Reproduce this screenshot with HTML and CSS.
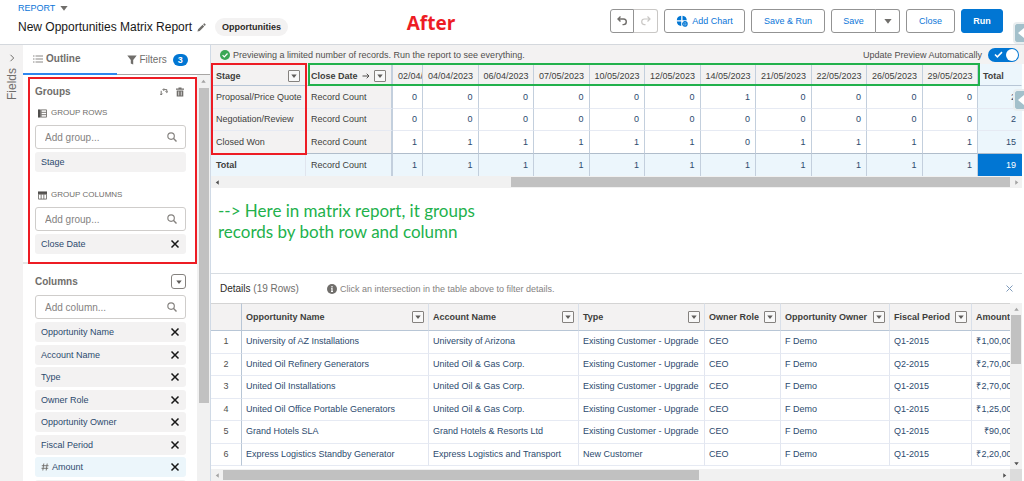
FILE: index.html
```html
<!DOCTYPE html>
<html lang="en">
<head>
  <meta charset="UTF-8">
  <title>New Opportunities Matrix Report</title>
  <meta name="viewport" content="width=device-width, initial-scale=1">
  <link rel="stylesheet" href="styles.css">
</head>
<body>
  <svg class="sprite" aria-hidden="true">
    <symbol id="i-down" viewBox="0 0 10 10"><path d="M0.5 2.5h9L5 8.5z" fill="currentColor"/></symbol>
    <symbol id="i-x" viewBox="0 0 10 10"><path d="M1.5 1.5l7 7M8.5 1.5l-7 7" stroke="currentColor" stroke-width="1.5" fill="none"/></symbol>
    <symbol id="i-search" viewBox="0 0 12 12"><circle cx="4.9" cy="4.9" r="3.9" stroke="currentColor" stroke-width="1.4" fill="none"/><path d="M7.6 7.6l3.8 3.8" stroke="currentColor" stroke-width="1.7"/></symbol>
  </svg>

  <header class="topbar">
    <div class="title-block">
      <button class="object-menu" type="button">REPORT <svg><use href="#i-down"/></svg></button>
      <div class="title-row">
        <h1>New Opportunities Matrix Report</h1>
        <svg class="pencil" viewBox="0 0 10 10"><path d="M0.5 9.5l0.7-2.5 5-5 1.8 1.8-5 5zM6.8 1.4l0.9-0.9q0.4-0.3 0.8 0l1 1q0.3 0.4 0 0.8l-0.9 0.9z" fill="#706e6b"/></svg>
        <span class="pill">Opportunities</span>
      </div>
    </div>
    <div class="after-note">After</div>
    <div class="actions">
      <div class="btn-group">
        <button class="btn icon-btn" type="button" aria-label="Undo"><svg viewBox="0 0 12 12"><path d="M4.5 1.500L2 4l2.500 2.500M2 4h5.500a2.800 2.800 0 0 1 0 5.600H6.500" fill="none" stroke="#706e6b" stroke-width="1.400"/></svg></button>
        <button class="btn icon-btn" type="button" aria-label="Redo" disabled><svg viewBox="0 0 12 12"><path d="M7.500 1.500L10 4 7.500 6.500M10 4H4.500a2.800 2.800 0 0 0 0 5.600h1" fill="none" stroke="#c9c7c5" stroke-width="1.200"/></svg></button>
      </div>
      <button class="btn add-chart" type="button">
        <svg viewBox="0 0 12 12"><path d="M5.200 0.800v4.400H0.800A4.800 4.800 0 0 1 5.200 0.800zM6.500 0.800a4.800 4.800 0 0 1 4.300 4.400H6.500zM0.800 6.500h4.400v4.400A4.800 4.800 0 0 1 0.800 6.500z" fill="#0176d3"/><circle cx="8.900" cy="8.900" r="2.200" fill="none" stroke="#0176d3" stroke-width="1.200"/><path d="M8.900 6.700v4.400M6.700 8.900h4.400" stroke="#0176d3"/></svg>
        Add Chart
      </button>
      <button class="btn save-run" type="button">Save &amp; Run</button>
      <div class="btn-group">
        <button class="btn save" type="button">Save</button>
        <button class="btn more-btn" type="button" aria-label="More save options"><svg><use href="#i-down"/></svg></button>
      </div>
      <button class="btn close" type="button">Close</button>
      <button class="btn run" type="button">Run</button>
    </div>
  </header>

  <div class="workspace">
    <div class="rail">
      <svg viewBox="0 0 6 8"><path d="M1.500 0.800L4.700 4 1.500 7.200" fill="none" stroke="#706e6b"/></svg>
      <span>Fields</span>
    </div>

    <aside class="outline">
      <nav class="tabs">
        <a class="tab active" href="#outline"><svg viewBox="0 0 10 8"><path d="M0 1h1.500M0 4h1.500M0 7h1.500M2.500 1H10M2.500 4H10M2.500 7H10" stroke="#8a8886"/></svg>Outline</a>
        <a class="tab" href="#filters"><svg viewBox="0 0 10 10"><path d="M0.300 0.500h9.400L6.200 5v4.500L3.800 8.500V5z" fill="#706e6b"/></svg>Filters <span class="count">3</span></a>
      </nav>
      <div class="outline-body" id="outline">
        <div class="outline-scroll">
          <section class="groups">
            <div class="section-head">
              <h2>Groups</h2>
              <svg class="swap" viewBox="0 0 10 10"><path d="M1.500 3.500v5M0 7l1.500 1.700L3.200 7M4 2h4.500v3M6.800 4.300l1.700 1.400 1.500-1.400M5 0.500L3.600 2 5 3.500" fill="none" stroke="#706e6b" stroke-width="1.200"/></svg>
              <svg class="trash" viewBox="0 0 8 10"><path d="M0 1.500h2.500V0.400h3v1.100H8v1.300H0zM0.700 3.500h6.600V9.500H0.700z" fill="#706e6b"/><path d="M2.700 4.500v4M5.300 4.500v4" stroke="#fff" stroke-width="0.700"/></svg>
            </div>
            <label class="group-label" for="groupRows"><svg viewBox="0 0 10 10"><path d="M0 0.500h3v9H0z" fill="#514f4d"/><path d="M3.500 1h6v8h-6zM3.500 3.700h6M3.500 6.300h6" fill="none" stroke="#706e6b"/></svg>GROUP ROWS</label>
            <div class="search"><input id="groupRows" type="text" placeholder="Add group..."><svg><use href="#i-search"/></svg></div>
            <div class="chip">Stage</div>
            <label class="group-label second" for="groupCols"><svg viewBox="0 0 10 10"><path d="M0 0.500h10v3H0z" fill="#514f4d"/><path d="M0.500 3.500h9V9h-9zM3.500 3.500V9M6.500 3.500V9" fill="none" stroke="#706e6b"/></svg>GROUP COLUMNS</label>
            <div class="search"><input id="groupCols" type="text" placeholder="Add group..."><svg><use href="#i-search"/></svg></div>
            <div class="chip">Close Date<button type="button" aria-label="Remove Close Date"><svg><use href="#i-x"/></svg></button></div>
            <div class="mark mark-groups"></div>
          </section>
          <section class="columns">
            <div class="section-head">
              <h2><label for="addColumn">Columns</label></h2>
              <button class="menu-btn large" type="button" aria-label="Column options"><svg><use href="#i-down"/></svg></button>
            </div>
            <div class="search"><input id="addColumn" type="text" placeholder="Add column..."><svg><use href="#i-search"/></svg></div>
            <div class="chips">
              <div class="chip">Opportunity Name<button type="button" aria-label="Remove Opportunity Name"><svg><use href="#i-x"/></svg></button></div>
              <div class="chip">Account Name<button type="button" aria-label="Remove Account Name"><svg><use href="#i-x"/></svg></button></div>
              <div class="chip">Type<button type="button" aria-label="Remove Type"><svg><use href="#i-x"/></svg></button></div>
              <div class="chip">Owner Role<button type="button" aria-label="Remove Owner Role"><svg><use href="#i-x"/></svg></button></div>
              <div class="chip">Opportunity Owner<button type="button" aria-label="Remove Opportunity Owner"><svg><use href="#i-x"/></svg></button></div>
              <div class="chip">Fiscal Period<button type="button" aria-label="Remove Fiscal Period"><svg><use href="#i-x"/></svg></button></div>
              <div class="chip number"><svg class="hash" viewBox="0 0 8 8"><path d="M2.800 0.500l-1 7M6.200 0.500l-1 7M0.800 2.700h6.700M0.500 5.300h6.700" fill="none" stroke="#706e6b" stroke-width="0.900"/></svg>Amount<button type="button" aria-label="Remove Amount"><svg><use href="#i-x"/></svg></button></div>
              <div class="chip"></div>
            </div>
          </section>
        </div>
        <div class="vbar outline-bar"><svg class="up"><use href="#i-down"/></svg><div class="thumb"></div></div>
      </div>
    </aside>

    <main>
      <div class="preview-bar">
        <svg viewBox="0 0 10 10"><circle cx="5" cy="5" r="5" fill="#3ba755"/><path d="M2.600 5.100l1.700 1.700 3.200-3.300" fill="none" stroke="#fff" stroke-width="1.200"/></svg>
        <span>Previewing a limited number of records. Run the report to see everything.</span>
        <label class="toggle" for="autoUpdate">Update Preview Automatically
          <input id="autoUpdate" type="checkbox" checked>
          <span class="switch"><svg viewBox="0 0 10 8"><path d="M1 4l2.700 2.700L9 1.300" fill="none" stroke="#fff" stroke-width="1.700"/></svg></span>
        </label>
      </div>

      <section class="matrix">
        <table class="matrix-table">
          <colgroup><col class="c-stage"><col class="c-date"><col class="c-cut"><col span="10"><col class="c-total"></colgroup>
          <thead>
            <tr>
              <th class="dim"><div class="th">Stage<button class="menu-btn" type="button" aria-label="Stage options"><svg><use href="#i-down"/></svg></button></div></th>
              <th class="dim"><div class="th">Close Date<svg class="arrow" viewBox="0 0 8 8"><path d="M0.500 4h6.500M4.700 1.700L7 4 4.700 6.300" fill="none" stroke="#514f4d"/></svg><button class="menu-btn" type="button" aria-label="Close Date options"><svg><use href="#i-down"/></svg></button></div></th>
              <th class="cut">02/04/</th><th>04/04/2023</th><th>06/04/2023</th><th>07/05/2023</th><th>10/05/2023</th><th>12/05/2023</th><th>14/05/2023</th><th>21/05/2023</th><th>22/05/2023</th><th>26/05/2023</th><th>29/05/2023</th><th class="total">Total</th>
            </tr>
          </thead>
          <tbody>
            <tr><th>Proposal/Price Quote</th><th>Record Count</th><td>0</td><td>0</td><td>0</td><td>0</td><td>0</td><td>0</td><td>1</td><td>0</td><td>0</td><td>0</td><td>0</td><td class="total">2</td></tr>
            <tr><th>Negotiation/Review</th><th>Record Count</th><td>0</td><td>0</td><td>0</td><td>0</td><td>0</td><td>0</td><td>0</td><td>0</td><td>0</td><td>0</td><td>0</td><td class="total">2</td></tr>
            <tr><th>Closed Won</th><th>Record Count</th><td>1</td><td>1</td><td>1</td><td>1</td><td>1</td><td>1</td><td>0</td><td>1</td><td>1</td><td>1</td><td>1</td><td class="total">15</td></tr>
          </tbody>
          <tfoot>
            <tr><th class="strong">Total</th><th>Record Count</th><td>1</td><td>1</td><td>1</td><td>1</td><td>1</td><td>1</td><td>1</td><td>1</td><td>1</td><td>1</td><td>1</td><td class="grand">19</td></tr>
          </tfoot>
        </table>
        <div class="hbar matrix-bar"><svg class="left"><use href="#i-down"/></svg><div class="thumb"></div><svg class="right"><use href="#i-down"/></svg></div>
        <div class="mark mark-stage"></div>
        <div class="mark mark-dates"></div>
        <p class="matrix-note">--&gt; Here in matrix report, it groups<br>records by both row and column</p>
      </section>

      <section class="details">
        <div class="details-head">
          <h2>Details <span>(19 Rows)</span></h2>
          <svg class="info" viewBox="0 0 10 10"><circle cx="5" cy="5" r="5" fill="#706e6b"/><path d="M5 2v1.500M4.200 4.700H5v2.800M4 7.500h2" fill="none" stroke="#fff" stroke-width="1.200"/></svg>
          <p>Click an intersection in the table above to filter details.</p>
          <button type="button" aria-label="Close details"><svg viewBox="0 0 9 9"><path d="M1.500 1.500l6 6M7.500 1.500l-6 6" fill="none" stroke="currentColor"/></svg></button>
        </div>
        <div class="details-body">
          <div class="details-view">
            <table class="details-table">
              <colgroup><col class="d-num"><col class="d-name"><col class="d-account"><col class="d-type"><col class="d-role"><col class="d-owner"><col class="d-fiscal"><col class="d-amount"></colgroup>
              <thead>
                <tr>
                  <th></th>
                  <th><div class="th">Opportunity Name<button class="menu-btn" type="button" aria-label="Opportunity Name options"><svg><use href="#i-down"/></svg></button></div></th>
                  <th><div class="th">Account Name<button class="menu-btn" type="button" aria-label="Account Name options"><svg><use href="#i-down"/></svg></button></div></th>
                  <th><div class="th">Type<button class="menu-btn" type="button" aria-label="Type options"><svg><use href="#i-down"/></svg></button></div></th>
                  <th><div class="th">Owner Role<button class="menu-btn" type="button" aria-label="Owner Role options"><svg><use href="#i-down"/></svg></button></div></th>
                  <th><div class="th">Opportunity Owner<button class="menu-btn" type="button" aria-label="Opportunity Owner options"><svg><use href="#i-down"/></svg></button></div></th>
                  <th><div class="th">Fiscal Period<button class="menu-btn" type="button" aria-label="Fiscal Period options"><svg><use href="#i-down"/></svg></button></div></th>
                  <th>Amount</th>
                </tr>
              </thead>
              <tbody>
                <tr><td>1</td><td>University of AZ Installations</td><td>University of Arizona</td><td>Existing Customer - Upgrade</td><td>CEO</td><td>F Demo</td><td>Q1-2015</td><td>₹1,00,000.00</td></tr>
                <tr><td>2</td><td>United Oil Refinery Generators</td><td>United Oil &amp; Gas Corp.</td><td>Existing Customer - Upgrade</td><td>CEO</td><td>F Demo</td><td>Q2-2015</td><td>₹2,70,000.00</td></tr>
                <tr><td>3</td><td>United Oil Installations</td><td>United Oil &amp; Gas Corp.</td><td>Existing Customer - Upgrade</td><td>CEO</td><td>F Demo</td><td>Q1-2015</td><td>₹2,70,000.00</td></tr>
                <tr><td>4</td><td>United Oil Office Portable Generators</td><td>United Oil &amp; Gas Corp.</td><td>Existing Customer - Upgrade</td><td>CEO</td><td>F Demo</td><td>Q1-2015</td><td>₹1,25,000.00</td></tr>
                <tr><td>5</td><td>Grand Hotels SLA</td><td>Grand Hotels &amp; Resorts Ltd</td><td>Existing Customer - Upgrade</td><td>CEO</td><td>F Demo</td><td>Q1-2015</td><td>₹90,000.00</td></tr>
                <tr><td>6</td><td>Express Logistics Standby Generator</td><td>Express Logistics and Transport</td><td>New Customer</td><td>CEO</td><td>F Demo</td><td>Q1-2015</td><td>₹2,20,000.00</td></tr>
              </tbody>
            </table>
          </div>
          <div class="vbar details-vbar"><svg class="up"><use href="#i-down"/></svg><div class="thumb"></div><svg><use href="#i-down"/></svg></div>
          <div class="hbar details-hbar"><svg class="left"><use href="#i-down"/></svg><div class="thumb"></div><svg class="right"><use href="#i-down"/></svg></div>
          <div class="corner"></div>
        </div>
      </section>
    </main>
  </div>

  <button class="side-tab first" type="button" aria-label="Open side panel"></button>
  <button class="side-tab second" type="button" aria-label="Open help panel"></button>
</body>
</html>
```
FILE: styles.css
```css
* {
  box-sizing: border-box;
}
body {
  margin: 0;
  height: 100vh;
  display: flex;
  flex-direction: column;
  overflow: hidden;
  position: relative;
  font-family: "Liberation Sans", Arial, sans-serif;
  font-size: 9px;
  line-height: 12px;
  color: #3e3e3c;
  background: #fff;
}
h1, h2, p {
  margin: 0;
}
button {
  font: inherit;
  color: inherit;
  padding: 0;
  border: none;
  background: none;
  cursor: pointer;
}
svg {
  display: block;
  flex: none;
  width: 10px;
  height: 10px;
}
.sprite {
  position: absolute;
  width: 0;
  height: 0;
}

/* top bar */
.topbar {
  flex: none;
  height: 45px;
  display: flex;
  justify-content: space-between;
  border-bottom: 1px solid #d4d8dd;
  padding: 0 21px 0 18px;
}
.object-menu {
  display: flex;
  align-items: center;
  gap: 5px;
  margin-top: 2px;
  color: #0b76d8;
}
.object-menu svg {
  width: 8px;
  height: 8px;
  color: #706e6b;
}
.title-row {
  display: flex;
  align-items: center;
  margin-top: 4px;
}
.title-row h1 {
  font-size: 12px;
  font-weight: normal;
  color: #181818;
}
.pencil {
  width: 9px;
  height: 9px;
  margin: 0 9px 0 5px;
}
.pill {
  background: #f3f2f2;
  border-radius: 9px;
  padding: 3px 7px;
  color: #2b2826;
  font-weight: bold;
}
.after-note {
  font: bold 19px/24px "Open Sans", sans-serif;
  color: #ed1c24;
  margin-top: 11px;
  margin-left: -36px;
}
.actions {
  display: flex;
  gap: 6px;
  padding-top: 9px;
}
.btn {
  height: 24px;
  display: flex;
  align-items: center;
  justify-content: center;
  border: 1px solid #939393;
  border-radius: 3px;
  background: #fff;
  color: #0b76d8;
}
.btn-group {
  display: flex;
}
.btn-group .btn:first-child {
  border-radius: 3px 0 0 3px;
}
.btn-group .btn:last-child {
  border-radius: 0 3px 3px 0;
  border-left: none;
}
.icon-btn {
  width: 24px;
}
.icon-btn svg {
  width: 12px;
  height: 12px;
}
.icon-btn[disabled] {
  border-color: #c9c7c5;
}
.more-btn {
  width: 24px;
  color: #706e6b;
}
.more-btn svg {
  width: 8px;
  height: 8px;
}
.add-chart {
  width: 81px;
  gap: 4px;
}
.add-chart svg {
  width: 12px;
  height: 12px;
}
.save-run {
  width: 74px;
}
.save {
  width: 45px;
}
.close {
  width: 49px;
}
.run {
  width: 42px;
  background: #0176d3;
  border-color: #0176d3;
  color: #fff;
  font-weight: bold;
}

/* columns below the top bar */
.workspace {
  flex: 1;
  display: flex;
  min-height: 0;
}
.rail {
  flex: none;
  width: 23px;
  background: #f3f2f2;
  display: flex;
  flex-direction: column;
  align-items: center;
  gap: 6px;
  padding-top: 9px;
}
.rail svg {
  width: 6px;
  height: 8px;
}
.rail span {
  writing-mode: vertical-rl;
  transform: rotate(180deg);
  font-size: 12px;
  color: #706e6b;
}
.outline {
  flex: none;
  width: 188px;
  display: flex;
  flex-direction: column;
  border-right: 1px solid #d0dae6;
}
.tabs {
  flex: none;
  display: flex;
  height: 30px;
}
.tab {
  width: 50%;
  display: flex;
  align-items: center;
  gap: 3px;
  padding-left: 10px;
  font-size: 10px;
  color: #706e6b;
  text-decoration: none;
  border-bottom: 1px solid #a8a6a4;
}
.tab.active {
  font-weight: bold;
  border-bottom: 2px solid #2f86ee;
}
.count {
  background: #0176d3;
  color: #fff;
  font-size: 9px;
  font-weight: bold;
  border-radius: 7px;
  padding: 0 5px;
  margin-left: 3px;
}
.outline-body {
  flex: 1;
  display: flex;
  min-height: 0;
}
.outline-scroll {
  flex: 1;
  overflow: hidden;
}
.groups {
  position: relative;
  height: 189px;
  padding: 11px 11px 0 12px;
  border-bottom: 2px solid #e5e5e5;
}
.columns {
  padding: 10px 11px 0 12px;
}
.section-head {
  display: flex;
  align-items: center;
}
.section-head h2 {
  flex: 1;
  font-size: 10px;
  color: #706e6b;
}
.swap {
  width: 8px;
  height: 8px;
  margin-right: 8px;
}
.trash {
  width: 8px;
  height: 10px;
  margin-right: 2px;
}
.group-label {
  display: flex;
  align-items: center;
  gap: 4px;
  margin: 9px 0 6px 3px;
  font-size: 8px;
  color: #706e6b;
}
.group-label svg {
  width: 9px;
  height: 9px;
}
.group-label.second {
  margin-top: 17px;
}
.search {
  position: relative;
  margin-bottom: 3px;
}
.search input {
  display: block;
  width: 100%;
  height: 24px;
  border: 1px solid #cfcdcb;
  border-radius: 3px;
  padding: 0 26px 0 9px;
  font: inherit;
  font-size: 10px;
}
.search input::placeholder {
  color: #85827f;
}
.search svg {
  position: absolute;
  right: 9px;
  top: 7px;
  color: #85827f;
}
.chip {
  height: 20px;
  display: flex;
  align-items: center;
  background: #f3f2f2;
  border-radius: 3px;
  padding: 0 6px;
  color: #2c4a6e;
}
.chip.number {
  background: #ecf6fb;
}
.chip button {
  margin-left: auto;
  color: #181818;
}
.hash {
  width: 8px;
  height: 8px;
  margin-right: 3px;
}
.columns .section-head {
  margin-bottom: 6px;
}
.chips {
  height: 178px;
  display: flex;
  flex-direction: column;
  justify-content: space-between;
}
.menu-btn {
  flex: none;
  width: 12px;
  height: 12px;
  display: flex;
  align-items: center;
  justify-content: center;
  border: 1px solid #85827f;
  border-radius: 1px;
  background: #f8f8f8;
  color: #5f5d5b;
}
.menu-btn svg {
  width: 6px;
  height: 6px;
}
.menu-btn.large {
  width: 15px;
  height: 15px;
  border-radius: 3px;
  background: #fff;
}

/* scroll bars */
.vbar, .hbar {
  display: grid;
  background: #f1f1f1;
  color: #505050;
}
.vbar {
  justify-items: center;
}
.hbar {
  align-items: center;
  height: 12px;
}
.vbar svg, .hbar svg {
  width: 5px;
  height: 5px;
  align-self: center;
  justify-self: center;
}
.up {
  transform: rotate(180deg);
  color: #a3a3a3;
}
.left {
  transform: rotate(90deg);
}
.right {
  transform: rotate(-90deg);
}
.thumb {
  background: #c1c1c1;
}
.vbar .thumb {
  width: 10px;
}
.hbar .thumb {
  height: 10px;
}
.outline-bar {
  width: 13px;
  grid-template-rows: 13px 315fr 78fr;
}
.matrix-bar {
  margin-right: 2px;
  grid-template-columns: 12px 288fr 499fr 12px;
}
.matrix-bar .thumb {
  grid-column: 3;
}
.matrix-bar .right, .details-hbar .left {
  color: #a3a3a3;
}

/* preview */
main {
  flex: 1;
  min-width: 0;
  display: flex;
  flex-direction: column;
}
.preview-bar {
  flex: none;
  height: 19px;
  display: flex;
  align-items: center;
  gap: 3px;
  padding: 0 5px 0 9px;
  background: #f3f2f2;
  color: #514f4d;
}
.toggle {
  margin-left: auto;
  display: flex;
  align-items: center;
  gap: 6px;
}
.toggle input {
  position: absolute;
  opacity: 0;
}
.switch {
  width: 31px;
  height: 14px;
  border-radius: 7px;
  background: #0176d3;
  display: flex;
  align-items: center;
  justify-content: space-between;
  padding: 0 1px 0 6px;
}
.switch svg {
  width: 9px;
  height: 7px;
}
.switch::after {
  content: "";
  width: 12px;
  height: 12px;
  border-radius: 50%;
  background: #fff;
}
.matrix {
  flex: 1;
  position: relative;
}
table {
  border-collapse: separate;
  border-spacing: 0;
  table-layout: fixed;
}
th, td {
  padding: 0 5px;
  overflow: hidden;
  white-space: nowrap;
  text-align: left;
  font-weight: normal;
}
.th {
  display: flex;
  align-items: center;
  justify-content: space-between;
}
.arrow {
  width: 8px;
  height: 8px;
}
.matrix-table {
  width: calc(100% - 2px);
  height: 112px;
}
.matrix-table thead tr {
  height: 22px;
}
.matrix-table tfoot tr {
  height: 22px;
}
.c-stage {
  width: 95px;
}
.c-date {
  width: 87px;
}
.c-cut {
  width: 30px;
}
.c-total {
  width: 44px;
}
.matrix-table th {
  background: #f3f2f2;
  border-right: 1px solid #e0e5ee;
  border-bottom: 1px solid #e6eaf3;
}
.matrix-table th:nth-child(2) {
  border-right: 2px solid #c3cfdd;
}
.matrix-table thead th {
  padding: 2px 5px 0;
  border-bottom-color: #b8c6d6;
}
.matrix-table thead .dim, .matrix-table .strong {
  font-weight: bold;
}
.matrix-table thead th:nth-child(n+3) {
  border-right: 1px solid #c3cfdd;
}
.matrix-table td {
  text-align: right;
  color: #2c4a6e;
  border-right: 1px solid #c3cfdd;
  border-bottom: 1px solid #e6eaf3;
}
.matrix-table thead .cut {
  padding-right: 0;
}
.matrix-table thead th.total {
  font-weight: bold;
}
.matrix-table thead th.total, .matrix-table .total {
  background: #ecf6fc;
  border-right-color: #ecf6fc;
}
.matrix-table tbody tr:last-child > * {
  border-bottom-color: #b0bdcb;
}
.matrix-table tfoot th, .matrix-table tfoot td {
  background: #ecf6fc;
  border-bottom: none;
}
.matrix-table tfoot .grand {
  background: #0176d3;
  border-right-color: #0176d3;
  color: #fff;
}
.matrix-note {
  padding: 12px 7px;
  font: 17px/21px Lato, "Open Sans", sans-serif;
  color: #22b14c;
}

/* highlight frames */
.mark {
  position: absolute;
  pointer-events: none;
  border: 2px solid #ed1c24;
}
.mark-groups {
  top: 2px;
  left: 5px;
  right: 0;
  bottom: -2px;
}
.mark-stage {
  top: -1px;
  left: 0;
  width: 96px;
  height: 92px;
}
.mark-dates {
  top: -1px;
  left: 97px;
  right: 44px;
  height: 23px;
  border-color: #22b14c;
}

/* details */
.details {
  flex: none;
  height: 208px;
  display: flex;
  flex-direction: column;
  border-top: 1px solid #d8dde2;
  margin-right: 2px;
}
.details-head {
  flex: none;
  height: 29px;
  display: flex;
  align-items: center;
  padding: 0 8px 0 9px;
  color: #85827f;
}
.details-head h2 {
  font-size: 10px;
  font-weight: normal;
  color: #2b2826;
}
.details-head h2 span {
  color: #706e6b;
}
.info {
  margin: 0 3px 0 28px;
}
.details-head button {
  margin-left: auto;
  color: #7f9bbb;
}
.details-head button svg {
  width: 9px;
  height: 9px;
}
.details-body {
  flex: 1;
  min-height: 0;
  display: grid;
  grid-template-columns: minmax(0, 1fr) 12px;
  grid-template-rows: minmax(0, 1fr) 12px;
}
.details-view {
  overflow: hidden;
}
.details-table {
  width: 823px;
  height: 163px;
}
.d-num {
  width: 31px;
}
.d-name {
  width: 187px;
}
.d-account {
  width: 150px;
}
.d-type {
  width: 126px;
}
.d-role {
  width: 76px;
}
.d-owner {
  width: 109px;
}
.d-fiscal {
  width: 82px;
}
.d-amount {
  width: 62px;
}
.details-table th {
  height: 28px;
  padding: 0 4px;
  background: #f3f2f2;
  font-weight: bold;
  border-top: 1px solid #d4d4d4;
  border-right: 1px solid #d9e0ea;
  border-bottom: 1px solid #b8c6d6;
}
.details-table td {
  padding: 0 4px 1px;
  color: #2c4a6e;
  border-right: 1px solid #e2e6f0;
  border-bottom: 1px solid #e6eaf3;
}
.details-table td:first-child {
  text-align: center;
  color: #514f4d;
}
.details-table tr > :first-child {
  border-right-color: #b8c6d6;
}
.details-table td:last-child {
  text-align: right;
}
.details-vbar {
  grid-template-rows: 12px 49fr 92fr 12px;
}
.details-vbar svg:last-child {
  grid-row: 4;
}
.details-hbar {
  grid-template-columns: 12px 476fr 299fr 12px;
}
.details-hbar .right {
  grid-column: 4;
}
.corner {
  background: #dcdcdc;
}

/* collapsed panels on the right edge */
.side-tab {
  position: absolute;
  right: 0;
  width: 11px;
  height: 22px;
  border: 2px solid #e9eef0;
  border-right: none;
  border-radius: 4px 0 0 4px;
  background: #a3c0cb;
  display: flex;
  align-items: center;
  justify-content: flex-end;
}
.side-tab::after {
  content: "";
  border: 5px solid transparent;
  border-left: none;
  border-right: 6px solid #fff;
}
.side-tab.first {
  top: 22px;
}
.side-tab.second {
  top: 89px;
}
```
